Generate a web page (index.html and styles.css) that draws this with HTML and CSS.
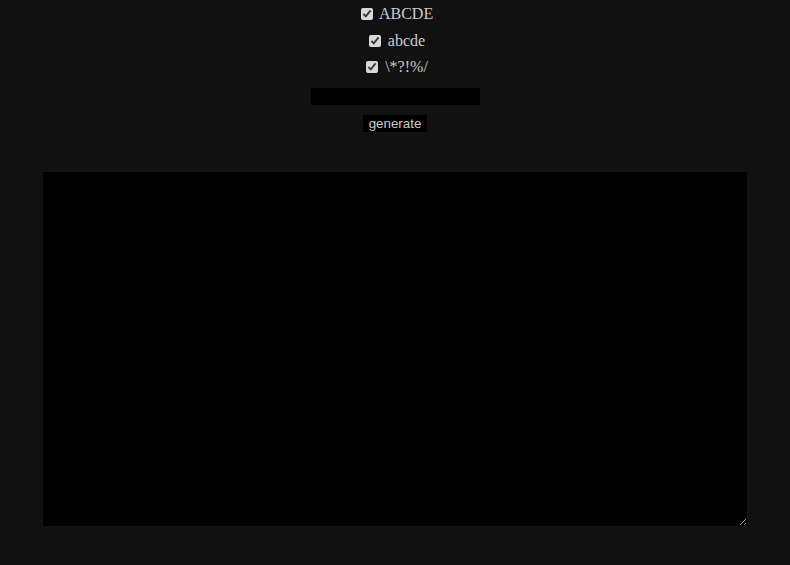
FILE: index.html
```html
<!DOCTYPE html>
<html>
<head>
<meta charset="utf-8">
<link rel="stylesheet" href="styles.css">
</head>
<body>
<main class="page">
  <div class="options">
    <label class="opt opt-upper"><input type="checkbox" checked> ABCDE</label>
    <label class="opt"><input type="checkbox" checked> abcde</label>
    <label class="opt"><input type="checkbox" checked> \*?!%/</label>
  </div>
  <input class="length" type="text">
  <button class="gen">generate</button>
  <textarea class="output"></textarea>
</main>
</body>
</html>
```
FILE: styles.css
```css
html, body {
  margin: 0;
  padding: 0;
  background: #111111;
  height: 100%;
}
.page {
  display: flex;
  flex-direction: column;
  align-items: center;
  font-family: "Liberation Serif", serif;
  font-size: 16px;
  color: #cccccc;
  padding-top: 1px;
}
.options {
  display: flex;
  flex-direction: column;
  align-items: center;
}
.opt {
  display: block;
  height: 26.5px;
  line-height: 26px;
}
.opt input {
  accent-color: #d9d9d9;
  margin: 0 3px 0 4px;
  width: 12px;
  height: 12px;
  vertical-align: -1px;
}
.length {
  margin-top: 7px;
  width: 169px;
  height: 17px;
  box-sizing: border-box;
  border: none;
  background: #000;
  color: #ccc;
  padding: 0 2px;
}
.gen {
  margin-top: 10px;
  height: 17px;
  padding: 0 6px;
  border: none;
  background: #000;
  color: #cccccc;
  font-family: "Liberation Sans", Arial, sans-serif;
  font-size: 13.33px;
  line-height: 17px;
}
.output {
  margin-top: 40px;
  width: 704px;
  height: 354px;
  box-sizing: border-box;
  border: none;
  background: #000;
  color: #ccc;
  padding: 2px;
}
```
